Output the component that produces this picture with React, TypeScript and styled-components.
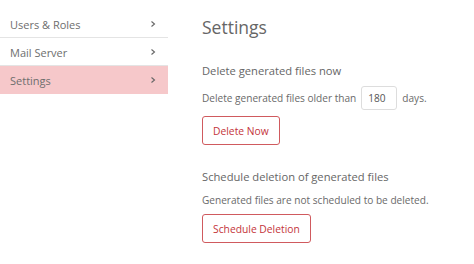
import styled, { createGlobalStyle } from 'styled-components';

const GlobalStyle = createGlobalStyle`
  body {
    margin: 0;
    background: #fff;
    font-family: 'Open Sans', 'Noto Sans', sans-serif;
    color: #666;
  }
`;

const menuItems = [
  { id: 1, name: 'Users & Roles' },
  { id: 2, name: 'Mail Server' },
  { id: 3, name: 'Settings', active: true },
];

export default function App() {
  return (
    <>
      <GlobalStyle />
      <Page>
        <Sidebar>
          {menuItems.map(({ id, name, active }) => (
            <MenuItem key={id} $active={!!active}>
              <span>{name}</span>
              <Chevron viewBox="0 0 8 8">
                <path d="M2.5 1.5 L5.5 4 L2.5 6.5" />
              </Chevron>
            </MenuItem>
          ))}
        </Sidebar>
        <Main>
          <Title>Settings</Title>
          <Section>
            <SectionTitle>Delete generated files now</SectionTitle>
            <Row>
              Delete generated files older than
              <DaysInput defaultValue="180" />
              days.
            </Row>
            <OutlineButton>Delete Now</OutlineButton>
          </Section>
          <Section>
            <SectionTitle>Schedule deletion of generated files</SectionTitle>
            <Row>Generated files are not scheduled to be deleted.</Row>
            <OutlineButton>Schedule Deletion</OutlineButton>
          </Section>
        </Main>
      </Page>
    </>
  );
}

const Page = styled.div`
  display: flex;
  width: 474px;
  height: 264px;
`;

const Sidebar = styled.nav`
  width: 168px;
  padding-top: 10px;
  flex-shrink: 0;
`;

const MenuItem = styled.div<{ $active: boolean }>`
  display: flex;
  align-items: center;
  justify-content: space-between;
  height: 28px;
  padding: 1px 11px 0 10px;
  font-size: 11px;
  color: #6e6e6e;
  background-color: ${(p) => (p.$active ? '#f6c8ca' : 'transparent')};
  border-bottom: 1px solid ${(p) => (p.$active ? '#f6c8ca' : '#e4e4e4')};
  box-sizing: border-box;
`;

const Chevron = styled.svg`
  width: 8px;
  height: 8px;
  fill: none;
  stroke: #666;
  stroke-width: 1.1;
`;

const Main = styled.main`
  padding: 13px 0 0 34px;
`;

const Title = styled.h1`
  margin: 0 0 21px;
  font-size: 17.5px;
  font-weight: 400;
  color: #666;
  line-height: 28px;
`;

const Section = styled.section`
  margin-bottom: 23px;
`;

const SectionTitle = styled.h2`
  margin: 0 0 5px;
  font-size: 11.2px;
  font-weight: 400;
  color: #666;
  line-height: 18px;
`;

const Row = styled.div`
  display: flex;
  align-items: center;
  gap: 3px;
  font-size: 10.1px;
  color: #6a6a6a;
  min-height: 18px;
`;

const DaysInput = styled.input`
  width: 36px;
  height: 24px;
  box-sizing: border-box;
  border: 1px solid #ddd;
  border-radius: 3px;
  padding: 0 6px;
  font-family: inherit;
  font-size: 10.1px;
  color: #555;
  margin: 1px 2px;
`;

const OutlineButton = styled.button`
  display: block;
  margin-top: 5px;
  height: 29px;
  padding: 0 10px;
  background: #fff;
  border: 1px solid #d05a5e;
  border-radius: 3px;
  color: #c4343a;
  font-family: inherit;
  font-size: 10.3px;
  cursor: pointer;
`;
